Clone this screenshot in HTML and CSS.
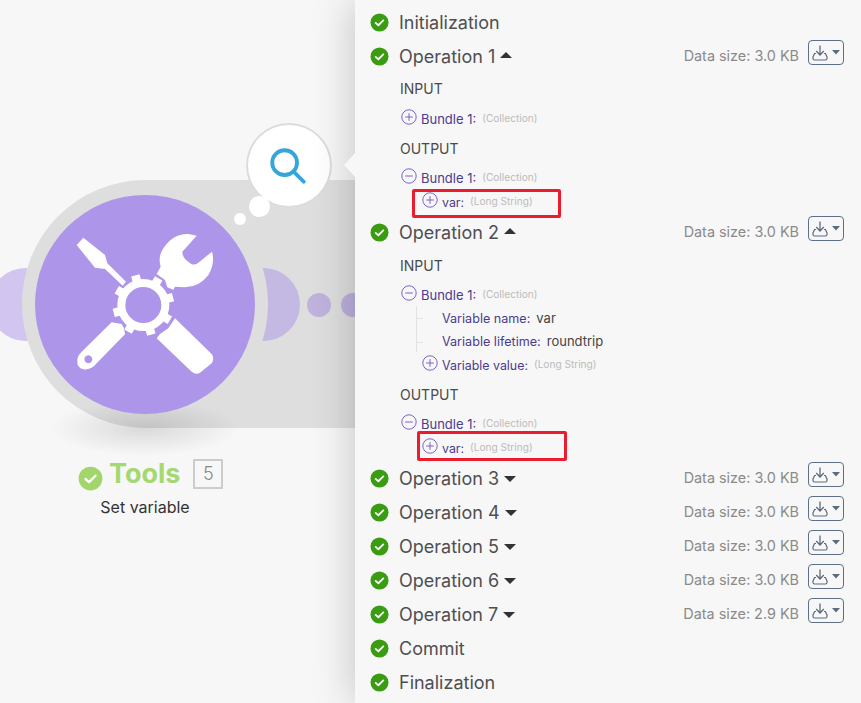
FILE: index.html
```html
<!DOCTYPE html>
<html lang="en">
<head>
<meta charset="utf-8">
<title>Tools - Set variable</title>
<link rel="stylesheet" href="styles.css">
</head>
<body>
<svg class="sprites" width="0" height="0" aria-hidden="true">
  <symbol id="ok" viewBox="0 0 20 20"><circle cx="10" cy="10" r="9.5" fill="currentColor"/><path d="M6 10.4l2.8 2.5L14 7.8" fill="none" stroke="#fff" stroke-width="1.9" stroke-linecap="round" stroke-linejoin="round"/></symbol>
  <symbol id="plus" viewBox="0 0 16 16"><circle cx="8" cy="8" r="7.2" fill="none" stroke="#7b62c9" stroke-width="1"/><path d="M4.2 8h7.6M8 4.2v7.6" stroke="#7b62c9" stroke-width="1" fill="none"/></symbol>
  <symbol id="minus" viewBox="0 0 16 16"><circle cx="8" cy="8" r="7.2" fill="none" stroke="#7b62c9" stroke-width="1"/><path d="M4.2 8h7.6" stroke="#7b62c9" stroke-width="1" fill="none"/></symbol>
  <symbol id="dl" viewBox="0 0 34 22"><path d="M11 3.500v9M7.200 9l3.800 4 3.800-4" fill="none" stroke="#5d6b80" stroke-width="1.300"/><path d="M7 11.500H5.600L4 15v1.500q0 1.500 1.500 1.500h11q1.500 0 1.500-1.500V15l-1.600-3.500H15" fill="none" stroke="#5d6b80" stroke-width="1.200"/><path d="M23 8h8l-4 4.500z" fill="#5d6b80"/></symbol>
</svg>
<div class="app">
  <div class="canvas">
    <div class="halo halo-left"></div>
    <div class="bar"></div>
    <div class="halo halo-right"></div>
    <div class="dot dot-a"></div>
    <div class="dot dot-b"></div>
    <div class="ring"></div>
    <div class="ground"></div>
    <div class="disc">
      <svg class="tools" viewBox="0 0 510 570" aria-hidden="true">
        <path fill="#fff" d="M50 135L70 113L135 165L142 190L198 245L188 257L135 207L105 203Z"/>
        <path fill="#fff" d="M410 107L367 155Q367 170 378 180L395 193Q405 196 415 188L456 155Q466 190 445 225Q420 260 375 262L345 260L340 269L322 262L315 240L290 222L302 200Q293 170 310 145Q340 100 385 102Z"/>
        <path fill="#fff" fill-rule="evenodd" d="M155 367L185 372L192 385L195 403L110 490Q95 510 70 508Q50 505 52 480Q52 468 65 455ZM85 466a12 12 0 1 0 .01 0Z"/>
        <path fill="#fff" d="M290 415L300 402L325 385L345 355L455 462Q465 475 455 490L420 518Q408 525 395 515Z"/>
        <g class="gear-teeth" fill="#fff" stroke="#ad96e9" stroke-width="3" paint-order="stroke">
          <rect x="237" y="223" width="26" height="30" transform="rotate(-15 250 315)"/>
          <rect x="237" y="223" width="26" height="30" transform="rotate(30 250 315)"/>
          <rect x="237" y="223" width="26" height="30" transform="rotate(75 250 315)"/>
          <rect x="237" y="223" width="26" height="30" transform="rotate(120 250 315)"/>
          <rect x="237" y="223" width="26" height="30" transform="rotate(165 250 315)"/>
          <rect x="237" y="223" width="26" height="30" transform="rotate(210 250 315)"/>
          <rect x="237" y="223" width="26" height="30" transform="rotate(255 250 315)"/>
          <rect x="237" y="223" width="26" height="30" transform="rotate(300 250 315)"/>
        </g>
        <circle cx="250" cy="315" r="66" fill="none" stroke="#fff" stroke-width="24"/>
      </svg>
    </div>
    <div class="bubble">
      <svg class="lens" viewBox="0 0 32 32" aria-hidden="true"><circle cx="13" cy="13" r="11" fill="none" stroke="#35a5db" stroke-width="3.400"/><path d="M21 21l9 9" stroke="#35a5db" stroke-width="3.400" stroke-linecap="round"/></svg>
    </div>
    <div class="puff puff-big"></div>
    <div class="puff puff-small"></div>
    <div class="label">
      <div class="title-row">
        <svg class="label-ok"><use href="#ok"/></svg>
        <span class="title">Tools</span>
        <span class="badge">5</span>
      </div>
      <div class="subtitle">Set variable</div>
    </div>
  </div>

  <main class="panel">
    <div class="notch"></div>
    <div class="op"><svg class="ok"><use href="#ok"/></svg><span class="op-name">Initialization</span></div>

    <div class="op"><svg class="ok"><use href="#ok"/></svg><span class="op-name">Operation 1</span><span class="caret up"></span><span class="size">Data size: 3.0 KB</span><button class="dl"><svg><use href="#dl"/></svg></button></div>
    <div class="io first">INPUT</div>
    <div class="node loose"><svg class="tg"><use href="#plus"/></svg><span class="key bundle">Bundle 1:</span><span class="type">(Collection)</span></div>
    <div class="io second">OUTPUT</div>
    <div class="node"><svg class="tg"><use href="#minus"/></svg><span class="key bundle">Bundle 1:</span><span class="type">(Collection)</span></div>
    <div class="node deep marked"><svg class="tg"><use href="#plus"/></svg><span class="key">var:</span><span class="type">(Long String)</span><span class="mark mark-a"></span></div>

    <div class="op after"><svg class="ok"><use href="#ok"/></svg><span class="op-name">Operation 2</span><span class="caret up"></span><span class="size">Data size: 3.0 KB</span><button class="dl"><svg><use href="#dl"/></svg></button></div>
    <div class="io first wide">INPUT</div>
    <div class="node"><svg class="tg"><use href="#minus"/></svg><span class="key bundle">Bundle 1:</span><span class="type">(Collection)</span></div>
    <div class="node deep leaf"><span class="key">Variable name:</span><span class="val">var</span></div>
    <div class="node deep leaf short"><span class="key">Variable lifetime:</span><span class="val">roundtrip</span></div>
    <div class="node deep"><svg class="tg"><use href="#plus"/></svg><span class="key">Variable value:</span><span class="type">(Long String)</span></div>
    <div class="io second">OUTPUT</div>
    <div class="node"><svg class="tg"><use href="#minus"/></svg><span class="key bundle">Bundle 1:</span><span class="type">(Collection)</span></div>
    <div class="node deep marked"><svg class="tg"><use href="#plus"/></svg><span class="key">var:</span><span class="type">(Long String)</span><span class="mark mark-b"></span></div>

    <div class="op after"><svg class="ok"><use href="#ok"/></svg><span class="op-name">Operation 3</span><span class="caret down"></span><span class="size">Data size: 3.0 KB</span><button class="dl"><svg><use href="#dl"/></svg></button></div>
    <div class="op"><svg class="ok"><use href="#ok"/></svg><span class="op-name">Operation 4</span><span class="caret down"></span><span class="size">Data size: 3.0 KB</span><button class="dl"><svg><use href="#dl"/></svg></button></div>
    <div class="op"><svg class="ok"><use href="#ok"/></svg><span class="op-name">Operation 5</span><span class="caret down"></span><span class="size">Data size: 3.0 KB</span><button class="dl"><svg><use href="#dl"/></svg></button></div>
    <div class="op"><svg class="ok"><use href="#ok"/></svg><span class="op-name">Operation 6</span><span class="caret down"></span><span class="size">Data size: 3.0 KB</span><button class="dl"><svg><use href="#dl"/></svg></button></div>
    <div class="op"><svg class="ok"><use href="#ok"/></svg><span class="op-name">Operation 7</span><span class="caret down"></span><span class="size">Data size: 2.9 KB</span><button class="dl"><svg><use href="#dl"/></svg></button></div>
    <div class="op"><svg class="ok"><use href="#ok"/></svg><span class="op-name">Commit</span></div>
    <div class="op"><svg class="ok"><use href="#ok"/></svg><span class="op-name">Finalization</span></div>
  </main>
</div>
</body>
</html>
```
FILE: styles.css
```css
* { box-sizing: border-box; }
html, body { margin: 0; height: 100%; overflow: hidden; }
body { background: #f7f7f7; font-family: Inter, "Liberation Sans", sans-serif; color: #444; }
.sprites { position: absolute; }
.app { display: flex; width: 861px; height: 703px; }

/* scenario canvas */
.canvas { position: relative; flex: 0 0 355px; height: 703px; overflow: hidden; }
.bar { position: absolute; left: 145px; top: 180px; width: 210px; height: 248px; background: #dedede; }
.halo { position: absolute; top: 268px; width: 73px; height: 73px; border-radius: 50%; }
.halo-left { left: -11px; background: #d2c5ef; }
.halo-right { left: 227px; background: #c4b9e2; }
.dot { position: absolute; top: 293px; width: 24px; height: 24px; border-radius: 50%; }
.dot-a { left: 307px; background: #bfb3de; }
.dot-b { left: 341px; background: #bcb0dc; }
.ring { position: absolute; left: 22px; top: 180px; width: 246px; height: 248px; border-radius: 50%; background: #dedede; }
.ground { position: absolute; left: 50px; top: 400px; width: 190px; height: 56px; border-radius: 50%; background: radial-gradient(closest-side, rgba(0,0,0,.12), rgba(0,0,0,0)); }
.disc { position: absolute; left: 35px; top: 195px; width: 220px; height: 219px; border-radius: 50%; background: #ad96e9; }
.tools { position: absolute; left: 25px; top: 5px; width: 170px; height: 190px; }
.bubble { position: absolute; left: 246px; top: 123px; width: 86px; height: 85px; border-radius: 50%; background: #fff; border: 2px solid #dcdcdc; }
.lens { position: absolute; left: 22px; top: 23px; width: 36px; height: 36px; }
.puff { position: absolute; border-radius: 50%; background: #fff; }
.puff-big { left: 249px; top: 196px; width: 21px; height: 21px; }
.puff-small { left: 234px; top: 213px; width: 12px; height: 12px; }

.label { position: absolute; left: 78px; top: 458px; width: 145px; }
.title-row { display: flex; align-items: center; height: 32px; }
.label-ok { width: 25px; height: 25px; color: #a2d56c; margin-top: 8px; flex: none; }
.title { margin-left: 6px; font-size: 27px; line-height: 32px; font-weight: 700; color: #a5d86f; }
.badge { margin-left: 13px; width: 30px; height: 30px; border: 2px solid #ccc; font-size: 18px; line-height: 26px; text-align: center; color: #888; font-weight: 300; }
.subtitle { margin-top: 6px; width: 134px; text-align: center; font-size: 16px; line-height: 22px; color: #333; }

/* log panel */
.panel { position: relative; flex: 1; height: 703px; padding: 5px 17px 0 15px; background: #f7f7f7; box-shadow: 0 0 40px rgba(0,0,0,.22); }
.notch { position: absolute; left: -11px; top: 153px; width: 0; height: 0; border-top: 12px solid transparent; border-bottom: 12px solid transparent; border-right: 11px solid #f7f7f7; }
.op { display: flex; align-items: center; height: 34px; }
.op.after { margin-top: 2px; }
.ok { width: 19px; height: 19px; color: #3a9c10; flex: none; }
.op-name { margin-left: 10px; margin-top: 2px; font-size: 18px; line-height: 24px; color: #4f4f4f; }
.caret { width: 0; height: 0; margin-left: 5px; border-left: 6px solid transparent; border-right: 6px solid transparent; }
.caret.up { border-bottom: 6px solid #333; margin-top: -3px; }
.caret.down { border-top: 6px solid #333; margin-top: 2px; margin-left: 5px; }
.size { margin-left: auto; margin-top: -2px; font-size: 14.400px; color: #8a8a8a; }
.dl { margin-left: 9px; margin-top: -7px; width: 36px; height: 25px; padding: 0; background: transparent; border: 1px solid #5f6f86; border-radius: 4px; display: flex; align-items: center; justify-content: center; }
.dl svg { width: 34px; height: 22px; }

.io { height: 24px; line-height: 24px; margin-left: 30px; font-size: 14px; color: #4a4a4a; margin-bottom: 4px; }
.io.first { margin-top: 4px; }
.io.wide { margin-top: 5px; }
.io.second { margin-top: 7px; }
.node { position: relative; display: flex; align-items: center; height: 24px; margin-left: 31px; }
.node.loose { margin-top: 5px; }
.tg { width: 16px; height: 16px; flex: none; margin-top: -3px; margin-right: 4px; }
.key { font-size: 12.400px; margin-top: 2px; color: #4b3b8f; }
.key.bundle { font-size: 13px; }
.type { margin-left: 6px; font-size: 10.100px; color: #bbb; margin-top: -1px; }
.val { margin-left: 6px; font-size: 13px; color: #444; }
.node.deep { margin-left: 52px; }
.node.leaf { padding-left: 20px; margin-left: 52px; }
.node.leaf .key { margin-top: 0; font-size: 12.600px; }
.node.leaf.short { height: 22px; }
.node.leaf::before { content: ""; position: absolute; left: -6px; top: 0; bottom: 0; width: 1px; background: #e2e2e2; }
.node.leaf::after { content: ""; position: absolute; left: -6px; top: 12px; width: 7px; height: 1px; background: #e2e2e2; }
.mark { position: absolute; border: 3px solid #ea1c2d; border-radius: 2px; pointer-events: none; }
.mark-a { left: -10px; top: 0; width: 149px; height: 29px; }
.mark-b { left: -5px; top: -4px; width: 150px; height: 30px; }
```
